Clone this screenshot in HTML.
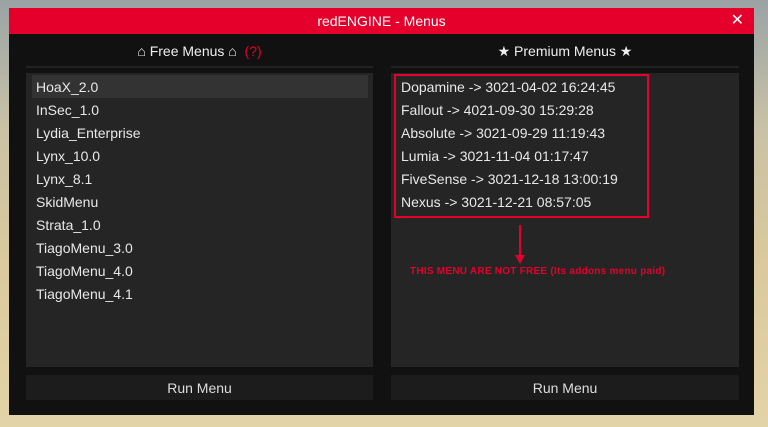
<!DOCTYPE html><html><head><style>
body{margin:0;width:768px;height:427px;overflow:hidden;background:linear-gradient(180deg,#9aa3a5 0%,#c9c2a6 30%,#d9c99c 60%,#e3d4a8 100%);font-family:"Liberation Sans",sans-serif;position:relative}
.win{position:absolute;left:9px;top:8px;width:745px;height:407px;background:#111}
.title{height:26px;background:#e4002b;color:#fff;font-size:14px;text-align:center;line-height:26px;position:relative}
.x{position:absolute;right:10px;top:0;font-size:16px;font-weight:100}
.hd{position:absolute;top:34px;color:#eee;font-size:14px;text-align:center;line-height:34px}
.sep{position:absolute;top:66px;height:2px;background:#222}
.list{position:absolute;top:73px;height:294px;background:#252525}
.row{position:absolute;left:6px;color:#e8e8e8;font-size:14px;height:23px;line-height:25px;padding-left:4px}
.btn{position:absolute;top:375px;height:25px;background:#1c1c1c;color:#ddd;font-size:14px;text-align:center;line-height:26px}
</style></head><body>
<div class="win">
<div class="title">redENGINE - Menus<span class="x">✕</span></div>
</div>
<div class="hd" style="left:26px;width:347px">⌂ Free Menus ⌂ <span style="color:#e4002b">&nbsp;(?)</span></div>
<div class="hd" style="left:391px;width:348px">★ Premium Menus ★</div>
<div class="sep" style="left:26px;width:347px"></div>
<div class="sep" style="left:391px;width:348px"></div>
<div class="list" style="left:26px;width:347px">
<div class="row" style="top:2px;width:332px;background:#333">HoaX_2.0</div>
<div class="row" style="top:25px">InSec_1.0</div>
<div class="row" style="top:48px">Lydia_Enterprise</div>
<div class="row" style="top:71px">Lynx_10.0</div>
<div class="row" style="top:94px">Lynx_8.1</div>
<div class="row" style="top:117px">SkidMenu</div>
<div class="row" style="top:140px">Strata_1.0</div>
<div class="row" style="top:163px">TiagoMenu_3.0</div>
<div class="row" style="top:186px">TiagoMenu_4.0</div>
<div class="row" style="top:209px">TiagoMenu_4.1</div>
</div>
<div class="list" style="left:391px;width:348px">
<div class="row" style="top:2px">Dopamine -&gt; 3021-04-02 16:24:45</div>
<div class="row" style="top:25px">Fallout -&gt; 4021-09-30 15:29:28</div>
<div class="row" style="top:48px">Absolute -&gt; 3021-09-29 11:19:43</div>
<div class="row" style="top:71px">Lumia -&gt; 3021-11-04 01:17:47</div>
<div class="row" style="top:94px">FiveSense -&gt; 3021-12-18 13:00:19</div>
<div class="row" style="top:117px">Nexus -&gt; 3021-12-21 08:57:05</div>
</div>
<div style="position:absolute;left:394px;top:74px;width:251px;height:140px;border:2px solid #e4002b"></div>
<div style="position:absolute;left:519px;top:225px;width:2px;height:32px;background:#e4002b"></div>
<div style="position:absolute;left:515px;top:255px;width:0;height:0;border-left:5px solid transparent;border-right:5px solid transparent;border-top:9px solid #e4002b"></div>
<div style="position:absolute;left:410px;top:266px;color:#e4002b;font-size:10px;font-weight:bold;letter-spacing:0.25px;white-space:nowrap">THIS MENU ARE NOT FREE (Its addons menu paid)</div>
<div class="btn" style="left:26px;width:347px">Run Menu</div>
<div class="btn" style="left:391px;width:348px">Run Menu</div>
</body></html>
